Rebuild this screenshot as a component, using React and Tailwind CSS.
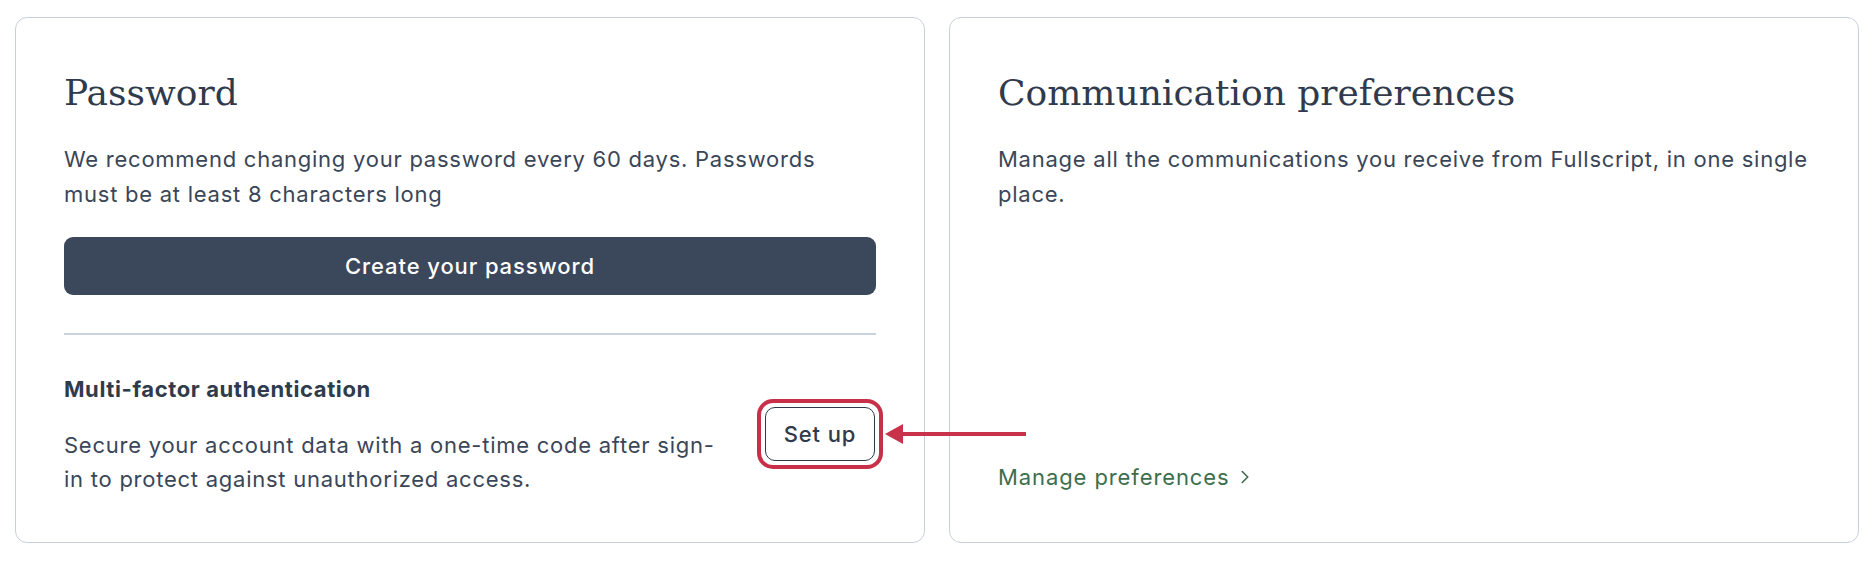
import { ChevronRight } from 'lucide-react';

const serif = "font-['DejaVu_Serif',serif]";

function Arrow() {
  return (
    <svg
      className="absolute left-[calc(100%+6px)] top-1/2 z-10 -translate-y-1/2"
      width="141"
      height="20"
      viewBox="0 0 141 20"
    >
      <polygon points="0,10 18,0 18,20" fill="#c8334b" />
      <rect x="17" y="8" width="124" height="4" fill="#c8334b" />
    </svg>
  );
}

export default function App() {
  return (
    <div className="min-h-screen bg-white px-[15px] pt-[17px] font-['Inter',sans-serif] text-[#3a4658] tracking-[0.75px]">
      <div className="grid grid-cols-2 gap-6">
        {/* password card */}
        <section className="relative rounded-[12px] border border-[#c6d0dd] bg-white px-[48px] pt-[53px] pb-[45px]">
          <h2 className={`${serif} text-[36px] leading-[44px] tracking-normal text-[#2f3b4c]`}>Password</h2>
          <p className="mt-[27px] text-[22px] leading-[34.5px]">
            We recommend changing your password every 60 days. Passwords must be at least 8 characters long
          </p>
          <button type="button" className="mt-[26px] flex h-[58px] w-full items-center justify-center rounded-[9px] bg-[#3b475a] text-[22px] font-medium tracking-[0.9px] text-white">
            Create your password
          </button>
          <div className="mt-[38px] h-[2px] bg-[#c9d2de]" />

          <div className="mt-[37px] flex items-center justify-between">
            <div className="w-[660px]">
              <h3 className="text-[22px] font-bold leading-[34.5px] tracking-[0.6px] text-[#2f3b4c]">Multi-factor authentication</h3>
              <p className="mt-[21px] text-[22px] leading-[34.5px]">
                Secure your account data with a one-time code after sign-in to protect against unauthorized access.
              </p>
            </div>
            <div className="relative -mr-[7px] rounded-[16px] border-4 border-[#c8304a] p-[4px]">
              <button type="button" className="flex h-[54px] w-[110px] items-center justify-center rounded-[10px] border border-[#2d3848] text-[22px] font-medium tracking-[0.9px] text-[#2f3b4c]">
                Set up
              </button>
              <Arrow />
            </div>
          </div>
        </section>

        {/* communication card */}
        <section className="flex flex-col rounded-[12px] border border-[#c6d0dd] bg-white px-[48px] pt-[53px] pb-[47px]">
          <h2 className={`${serif} text-[36px] leading-[44px] tracking-normal text-[#2f3b4c]`}>Communication preferences</h2>
          <p className="mt-[27px] text-[22px] leading-[34.5px]">
            Manage all the communications you receive from Fullscript, in one single place.
          </p>
          <a href="#" className="mt-auto flex items-center gap-[4px] text-[22px] leading-[34.5px] tracking-[0.9px] text-[#3d6e4c]">
            Manage preferences
            <ChevronRight size={22} strokeWidth={1.75} />
          </a>
        </section>
      </div>
    </div>
  );
}
